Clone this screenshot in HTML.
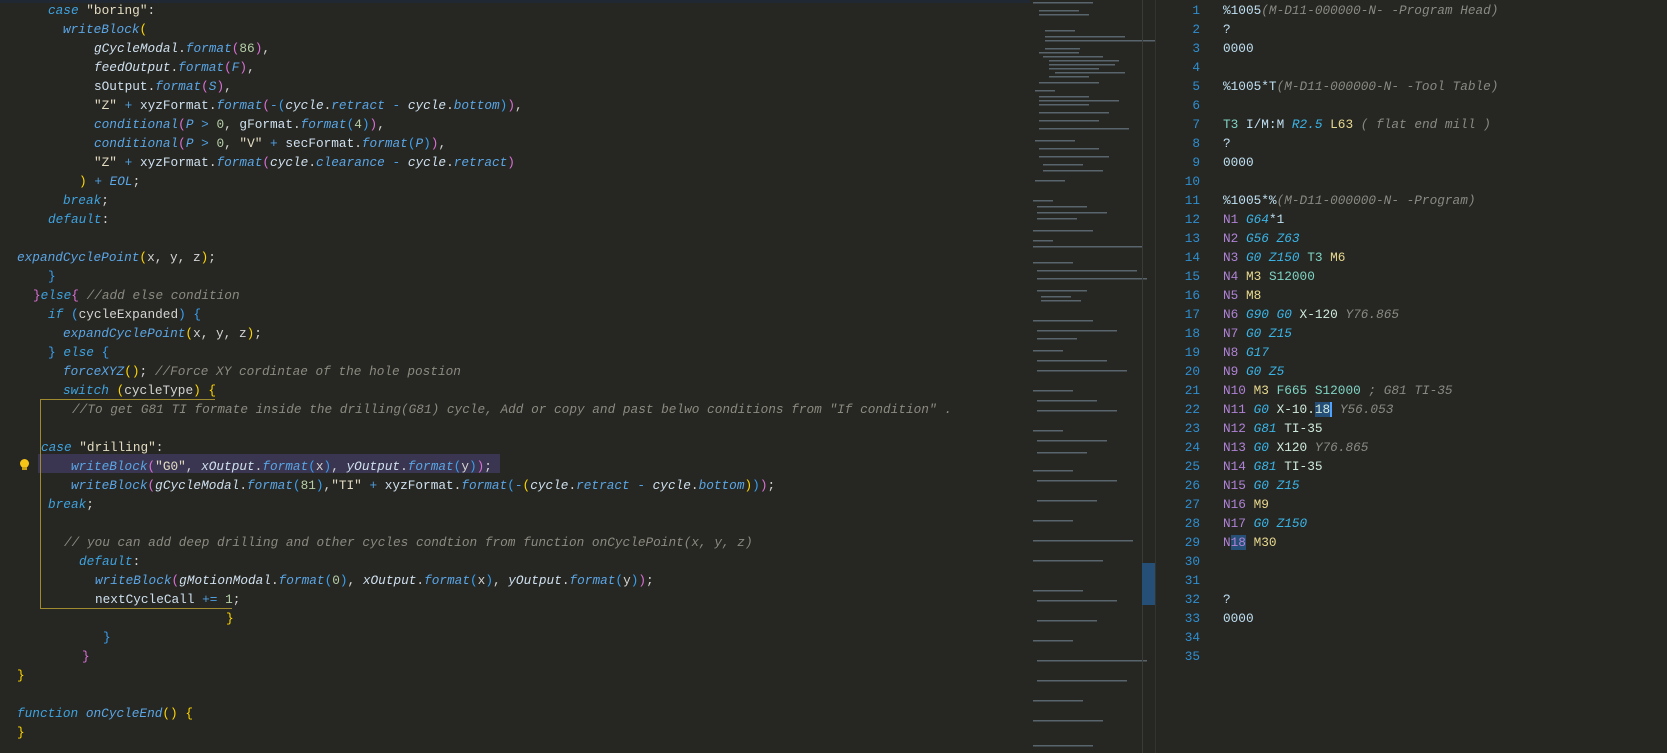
<!DOCTYPE html>
<html><head><meta charset="utf-8"><style>
body{margin:0;width:1667px;height:753px;background:#262622;overflow:hidden;position:relative;font-family:"Liberation Mono",monospace;font-size:12.75px;color:#d4d4d4}
.l{position:absolute;white-space:pre;line-height:19px;height:19px}
.k{color:#3ea3e0;font-style:italic}.f{color:#5aa6e6;font-style:italic}.v{color:#cfe0ee}.vi{color:#cfe0ee;font-style:italic}
.s{color:#e3dcc2}.n{color:#b5cea8}.y{color:#ffd700}.p{color:#da70d6}.b{color:#3aa0f0}.c{color:#8b8b80;font-style:italic}.o{color:#4f9fe0}
.ln{position:absolute;left:1160px;width:40px;text-align:right;color:#2f8fd0;white-space:pre;line-height:19px}
.N{color:#b083d6}.G{color:#3ab5e8;font-style:italic}.M{color:#e8d990}.X{color:#cfeadf}.Y{color:#8a8a84;font-style:italic}.Z{color:#bfe0f2}.T{color:#7fd4c4}
.hl{background:#264f78}
</style></head><body>
<div style="position:absolute;left:0;top:0;width:1030px;height:3px;background:#1f2833"></div>
<div style="position:absolute;left:38px;top:454px;width:462px;height:19px;background:#3a3550"></div>
<div style="position:absolute;left:40px;top:399px;width:175px;height:1px;background:#a08a30"></div>
<div style="position:absolute;left:40px;top:399px;width:1px;height:209px;background:#a08a30"></div>
<div style="position:absolute;left:40px;top:608px;width:192px;height:1px;background:#a08a30"></div>
<div style="position:absolute;left:20px;top:459px;width:9px;height:9px;border-radius:50%;background:#f5c518"></div>
<div style="position:absolute;left:22px;top:467px;width:5px;height:3px;background:#c9a010"></div>

<div class="l" style="top:1px;left:48px"><span class="k">case</span> <span class="s">"boring"</span>:</div>
<div class="l" style="top:20px;left:63px"><span class="f">writeBlock</span><span class="y">(</span></div>
<div class="l" style="top:39px;left:94px"><span class="vi">gCycleModal</span>.<span class="f">format</span><span class="p">(</span><span class="n">86</span><span class="p">)</span>,</div>
<div class="l" style="top:58px;left:94px"><span class="vi">feedOutput</span>.<span class="f">format</span><span class="p">(</span><span class="f">F</span><span class="p">)</span>,</div>
<div class="l" style="top:77px;left:94px"><span class="v">sOutput</span>.<span class="f">format</span><span class="p">(</span><span class="f">S</span><span class="p">)</span>,</div>
<div class="l" style="top:96px;left:94px"><span class="s">"Z"</span> <span class="o">+</span> <span class="v">xyzFormat</span>.<span class="f">format</span><span class="p">(</span><span class="o">-</span><span class="b">(</span><span class="vi">cycle</span>.<span class="f">retract</span> <span class="o">-</span> <span class="vi">cycle</span>.<span class="f">bottom</span><span class="b">)</span><span class="p">)</span>,</div>
<div class="l" style="top:115px;left:94px"><span class="f">conditional</span><span class="p">(</span><span class="f">P</span> <span class="o">&gt;</span> <span class="n">0</span>, <span class="v">gFormat</span>.<span class="f">format</span><span class="b">(</span><span class="n">4</span><span class="b">)</span><span class="p">)</span>,</div>
<div class="l" style="top:134px;left:94px"><span class="f">conditional</span><span class="p">(</span><span class="f">P</span> <span class="o">&gt;</span> <span class="n">0</span>, <span class="s">"V"</span> <span class="o">+</span> <span class="v">secFormat</span>.<span class="f">format</span><span class="b">(</span><span class="f">P</span><span class="b">)</span><span class="p">)</span>,</div>
<div class="l" style="top:153px;left:94px"><span class="s">"Z"</span> <span class="o">+</span> <span class="v">xyzFormat</span>.<span class="f">format</span><span class="p">(</span><span class="vi">cycle</span>.<span class="f">clearance</span> <span class="o">-</span> <span class="vi">cycle</span>.<span class="f">retract</span><span class="p">)</span></div>
<div class="l" style="top:172px;left:79px"><span class="y">)</span> <span class="o">+</span> <span class="f">EOL</span>;</div>
<div class="l" style="top:191px;left:63px"><span class="k">break</span>;</div>
<div class="l" style="top:210px;left:48px"><span class="k">default</span>:</div>
<div class="l" style="top:248px;left:17px"><span class="f">expandCyclePoint</span><span class="y">(</span>x, y, z<span class="y">)</span>;</div>
<div class="l" style="top:267px;left:48px"><span class="b">}</span></div>
<div class="l" style="top:286px;left:33px"><span class="p">}</span><span class="k">else</span><span class="p">{</span> <span class="c">//add else condition</span></div>
<div class="l" style="top:305px;left:48px"><span class="k">if</span> <span class="b">(</span>cycleExpanded<span class="b">)</span> <span class="b">{</span></div>
<div class="l" style="top:324px;left:63px"><span class="f">expandCyclePoint</span><span class="y">(</span>x, y, z<span class="y">)</span>;</div>
<div class="l" style="top:343px;left:48px"><span class="b">}</span> <span class="k">else</span> <span class="b">{</span></div>
<div class="l" style="top:362px;left:63px"><span class="f">forceXYZ</span><span class="y">()</span>; <span class="c">//Force XY cordintae of the hole postion</span></div>
<div class="l" style="top:381px;left:63px"><span class="k">switch</span> <span class="y">(</span>cycleType<span class="y">)</span> <span class="y">{</span></div>
<div class="l" style="top:400px;left:72px"><span class="c">//To get G81 TI formate inside the drilling(G81) cycle, Add or copy and past belwo conditions from "If condition" .</span></div>
<div class="l" style="top:438px;left:41px"><span class="k">case</span> <span class="s">"drilling"</span>:</div>
<div class="l" style="top:457px;left:71px"><span class="f">writeBlock</span><span class="p">(</span><span class="s">"G0"</span>, <span class="vi">xOutput</span>.<span class="f">format</span><span class="b">(</span>x<span class="b">)</span>, <span class="vi">yOutput</span>.<span class="f">format</span><span class="b">(</span>y<span class="b">)</span><span class="p">)</span>;</div>
<div class="l" style="top:476px;left:71px"><span class="f">writeBlock</span><span class="p">(</span><span class="vi">gCycleModal</span>.<span class="f">format</span><span class="b">(</span><span class="n">81</span><span class="b">)</span>,<span class="s">"TI"</span> <span class="o">+</span> <span class="v">xyzFormat</span>.<span class="f">format</span><span class="b">(</span><span class="o">-</span><span class="y">(</span><span class="vi">cycle</span>.<span class="f">retract</span> <span class="o">-</span> <span class="vi">cycle</span>.<span class="f">bottom</span><span class="y">)</span><span class="b">)</span><span class="p">)</span>;</div>
<div class="l" style="top:495px;left:48px"><span class="k">break</span>;</div>
<div class="l" style="top:533px;left:64px"><span class="c">// you can add deep drilling and other cycles condtion from function onCyclePoint(x, y, z)</span></div>
<div class="l" style="top:552px;left:79px"><span class="k">default</span>:</div>
<div class="l" style="top:571px;left:95px"><span class="f">writeBlock</span><span class="p">(</span><span class="vi">gMotionModal</span>.<span class="f">format</span><span class="b">(</span><span class="n">0</span><span class="b">)</span>, <span class="vi">xOutput</span>.<span class="f">format</span><span class="b">(</span>x<span class="b">)</span>, <span class="vi">yOutput</span>.<span class="f">format</span><span class="b">(</span>y<span class="b">)</span><span class="p">)</span>;</div>
<div class="l" style="top:590px;left:95px"><span class="v">nextCycleCall</span> <span class="o">+=</span> <span class="n">1</span>;</div>
<div class="l" style="top:609px;left:226px"><span class="y">}</span></div>
<div class="l" style="top:628px;left:103px"><span class="b">}</span></div>
<div class="l" style="top:647px;left:82px"><span class="p">}</span></div>
<div class="l" style="top:666px;left:17px"><span class="y">}</span></div>
<div class="l" style="top:704px;left:17px"><span class="k">function</span> <span class="f">onCycleEnd</span><span class="y">()</span> <span class="y">{</span></div>
<div class="l" style="top:723px;left:17px"><span class="y">}</span></div>

<svg style="position:absolute;left:1025px;top:0" width="130" height="753">
<g fill="#6a7a86" opacity="0.75">
<rect x="8" y="2" width="60" height="1.5"/><rect x="14" y="10" width="40" height="1.5"/><rect x="14" y="14" width="50" height="1.5"/><rect x="20" y="30" width="30" height="1.5"/><rect x="20" y="36" width="80" height="1.5"/><rect x="20" y="40" width="110" height="1.5"/><rect x="20" y="48" width="35" height="1.5"/>
<rect x="14" y="52" width="40" height="1.5"/><rect x="18" y="56" width="60" height="1.5"/><rect x="24" y="60" width="70" height="1.5"/><rect x="24" y="64" width="66" height="1.5"/><rect x="24" y="68" width="50" height="1.5"/><rect x="30" y="72" width="70" height="1.5"/><rect x="24" y="76" width="40" height="1.5"/><rect x="14" y="82" width="60" height="1.5"/>
<rect x="10" y="90" width="20" height="1.5"/><rect x="14" y="96" width="50" height="1.5"/><rect x="14" y="100" width="80" height="1.5"/><rect x="14" y="104" width="50" height="1.5"/><rect x="14" y="112" width="70" height="1.5"/><rect x="14" y="120" width="60" height="1.5"/><rect x="14" y="128" width="90" height="1.5"/>
<rect x="10" y="140" width="40" height="1.5"/><rect x="14" y="148" width="60" height="1.5"/><rect x="14" y="156" width="70" height="1.5"/><rect x="18" y="164" width="40" height="1.5"/><rect x="18" y="170" width="60" height="1.5"/><rect x="10" y="180" width="30" height="1.5"/>
<rect x="8" y="200" width="20" height="1.5"/><rect x="12" y="206" width="50" height="1.5"/><rect x="12" y="212" width="70" height="1.5"/><rect x="12" y="218" width="40" height="1.5"/><rect x="8" y="230" width="60" height="1.5"/><rect x="8" y="240" width="20" height="1.5"/><rect x="8" y="246" width="110" height="1.5"/>
<rect x="8" y="262" width="40" height="1.5"/><rect x="12" y="270" width="100" height="1.5"/><rect x="12" y="278" width="110" height="1.5"/><rect x="12" y="290" width="50" height="1.5"/><rect x="16" y="296" width="30" height="1.5"/><rect x="16" y="300" width="40" height="1.5"/>
<rect x="8" y="320" width="60" height="1.5"/><rect x="12" y="330" width="80" height="1.5"/><rect x="12" y="338" width="40" height="1.5"/><rect x="8" y="350" width="30" height="1.5"/><rect x="12" y="360" width="70" height="1.5"/><rect x="12" y="370" width="90" height="1.5"/>
<rect x="8" y="390" width="40" height="1.5"/><rect x="12" y="400" width="60" height="1.5"/><rect x="12" y="410" width="80" height="1.5"/><rect x="8" y="430" width="30" height="1.5"/><rect x="12" y="440" width="70" height="1.5"/><rect x="12" y="452" width="50" height="1.5"/>
<rect x="8" y="470" width="40" height="1.5"/><rect x="12" y="480" width="80" height="1.5"/><rect x="12" y="500" width="60" height="1.5"/><rect x="8" y="520" width="40" height="1.5"/><rect x="8" y="540" width="100" height="1.5"/><rect x="8" y="560" width="70" height="1.5"/>
<rect x="8" y="590" width="50" height="1.5"/><rect x="12" y="600" width="80" height="1.5"/><rect x="12" y="620" width="60" height="1.5"/><rect x="8" y="640" width="40" height="1.5"/><rect x="12" y="660" width="110" height="1.5"/><rect x="12" y="680" width="90" height="1.5"/><rect x="8" y="700" width="50" height="1.5"/><rect x="8" y="720" width="70" height="1.5"/><rect x="8" y="745" width="60" height="1.5"/>
</g>
<rect x="117" y="0" width="1" height="753" fill="#3a3a36"/>
<rect x="117" y="563" width="13" height="42" fill="#264f78"/>
</svg>
<div style="position:absolute;left:1155px;top:0;width:1px;height:753px;background:#34342f"></div>

<div class="ln" style="top:1px">1
2
3
4
5
6
7
8
9
10
11
12
13
14
15
16
17
18
19
20
21
22
23
24
25
26
27
28
29
30
31
32
33
34
35</div>
<div style="position:absolute;left:1223px;top:1px;white-space:pre;line-height:19px" class="Z"><span class="Z">%1005</span><span class="Y">(M-D11-000000-N- -Program Head)</span>
?
0000

%1005*T<span class="Y">(M-D11-000000-N- -Tool Table)</span>

<span class="T">T3</span> I/M:M <span class="G">R2.5</span> <span class="M">L63</span> <span class="Y">( flat end mill )</span>
?
0000

%1005*%<span class="Y">(M-D11-000000-N- -Program)</span>
<span class="N">N1</span> <span class="G">G64</span>*1
<span class="N">N2</span> <span class="G">G56 Z63</span>
<span class="N">N3</span> <span class="G">G0 Z150</span> <span class="T">T3</span> <span class="M">M6</span>
<span class="N">N4</span> <span class="M">M3</span> <span class="T">S12000</span>
<span class="N">N5</span> <span class="M">M8</span>
<span class="N">N6</span> <span class="G">G90 G0</span> <span class="X">X-120</span> <span class="Y">Y76.865</span>
<span class="N">N7</span> <span class="G">G0 Z15</span>
<span class="N">N8</span> <span class="G">G17</span>
<span class="N">N9</span> <span class="G">G0 Z5</span>
<span class="N">N10</span> <span class="M">M3</span> <span class="T">F665 S12000</span> <span class="Y">; G81 TI-35</span>
<span class="N">N11</span> <span class="G">G0</span> <span class="X">X-10.<span class="hl">18</span></span><span style="border-left:2px solid #4ea0ff"></span> <span class="Y">Y56.053</span>
<span class="N">N12</span> <span class="G">G81</span> <span class="X">TI-35</span>
<span class="N">N13</span> <span class="G">G0</span> <span class="X">X120</span> <span class="Y">Y76.865</span>
<span class="N">N14</span> <span class="G">G81</span> <span class="X">TI-35</span>
<span class="N">N15</span> <span class="G">G0 Z15</span>
<span class="N">N16</span> <span class="M">M9</span>
<span class="N">N17</span> <span class="G">G0 Z150</span>
<span class="N">N<span class="hl">18</span></span> <span class="M">M30</span>


?
0000</div>
</body></html>
